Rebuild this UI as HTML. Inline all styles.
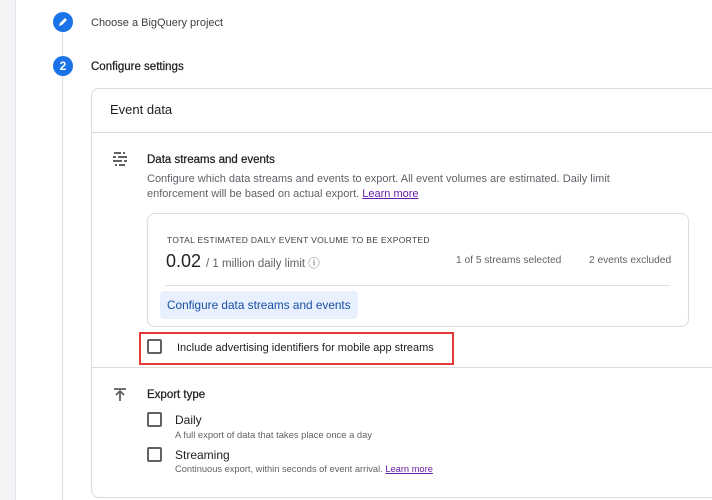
<!DOCTYPE html>
<html><head><meta charset="utf-8"><style>
*{margin:0;padding:0;box-sizing:border-box}
body{width:712px;height:500px;overflow:hidden;background:#fff;font-family:"Liberation Sans",Arial,sans-serif;color:#202124;position:relative}
.a{position:absolute;white-space:nowrap}
.cb{position:absolute;width:15px;height:15px;border:2px solid #5f6368;border-radius:2px}
</style></head><body>
<div class="a" style="left:0;top:0;width:16px;height:500px;background:#f1f3f4;border-right:1px solid #e3e5e8"></div>
<div class="a" style="left:62px;top:30px;width:1px;height:470px;background:#dadce0"></div>
<div class="a" style="left:53px;top:12px;width:20px;height:20px;border-radius:50%;background:#1a73e8">
<svg width="20" height="20" viewBox="0 0 20 20"><path d="M6 14l1-3 5-5 2 2-5 5z" fill="#fff"/></svg></div>
<div class="a" style="left:91px;top:17px;font-size:11px;color:#3c4043">Choose a BigQuery project</div>
<div class="a" style="left:53px;top:56px;width:20px;height:20px;border-radius:50%;background:#1a73e8;color:#fff;font-size:12px;font-weight:bold;text-align:center;line-height:20px">2</div>
<div class="a" style="left:91px;top:61px;font-size:11.5px;color:#202124;-webkit-text-stroke:0.25px #202124">Configure settings</div>
<div class="a" style="left:91px;top:88px;width:640px;height:410px;border:1px solid #dadce0;border-radius:8px"></div>
<div class="a" style="left:110px;top:102px;font-size:13px;color:#202124">Event data</div>
<div class="a" style="left:92px;top:132px;width:620px;height:1px;background:#dadce0"></div>
<svg class="a" style="left:112px;top:152px" width="16" height="14" viewBox="0 0 16 14"><g stroke="#5f6368" stroke-width="2"><path d="M2 1h7M11 1h2M1 5h3M6 5h9M1 9h9M12 9h3M3 13h2M7 13h6"/></g></svg>
<div class="a" style="left:147px;top:154px;font-size:11.5px;-webkit-text-stroke:0.25px #202124">Data streams and events</div>
<div class="a" style="left:147px;top:172px;font-size:11px;color:#5f6368;line-height:15px">Configure which data streams and events to export. All event volumes are estimated. Daily limit<br>enforcement will be based on actual export. <span style="color:#681da8;text-decoration:underline">Learn more</span></div>
<div class="a" style="left:147px;top:213px;width:542px;height:114px;border:1px solid #dadce0;border-radius:8px"></div>
<div class="a" style="left:167px;top:235px;font-size:8.5px;letter-spacing:0.3px;color:#3c4043">TOTAL ESTIMATED DAILY EVENT VOLUME TO BE EXPORTED</div>
<div class="a" style="left:166px;top:251px;font-size:18px;color:#202124">0.02 <span style="font-size:11.5px;color:#5f6368">/ 1 million daily limit ⓘ</span></div>
<div class="a" style="left:456px;top:255px;font-size:10.2px;color:#5f6368">1 of 5 streams selected</div>
<div class="a" style="left:589px;top:255px;font-size:10.2px;color:#5f6368">2 events excluded</div>
<div class="a" style="left:165px;top:285px;width:505px;height:1px;background:#e0e0e0"></div>
<div class="a" style="left:160px;top:291px;width:198px;height:28px;background:#e8f0fe;border-radius:4px;font-size:11.8px;color:#174ea6;line-height:28px;padding-left:7px">Configure data streams and events</div>
<div class="a" style="left:139px;top:332px;width:315px;height:33px;border:2px solid #e53935"></div>
<div class="cb" style="left:147px;top:339px"></div>
<div class="a" style="left:177px;top:342px;font-size:11px;color:#202124">Include advertising identifiers for mobile app streams</div>
<div class="a" style="left:92px;top:367px;width:620px;height:1px;background:#dadce0"></div>
<svg class="a" style="left:113px;top:388px" width="14" height="14" viewBox="0 0 14 14"><g stroke="#5f6368" stroke-width="1.8" fill="none"><path d="M1 1h12M7 13V4M3 7l4-4 4 4"/></g></svg>
<div class="a" style="left:147px;top:389px;font-size:11.5px;-webkit-text-stroke:0.25px #202124">Export type</div>
<div class="cb" style="left:147px;top:412px"></div>
<div class="a" style="left:175px;top:413px;font-size:12px">Daily</div>
<div class="a" style="left:175px;top:429px;font-size:9.4px;color:#5f6368">A full export of data that takes place once a day</div>
<div class="cb" style="left:147px;top:447px"></div>
<div class="a" style="left:175px;top:448px;font-size:12px">Streaming</div>
<div class="a" style="left:175px;top:464px;font-size:9.3px;color:#5f6368">Continuous export, within seconds of event arrival. <span style="color:#681da8;text-decoration:underline">Learn more</span></div>
</body></html>
